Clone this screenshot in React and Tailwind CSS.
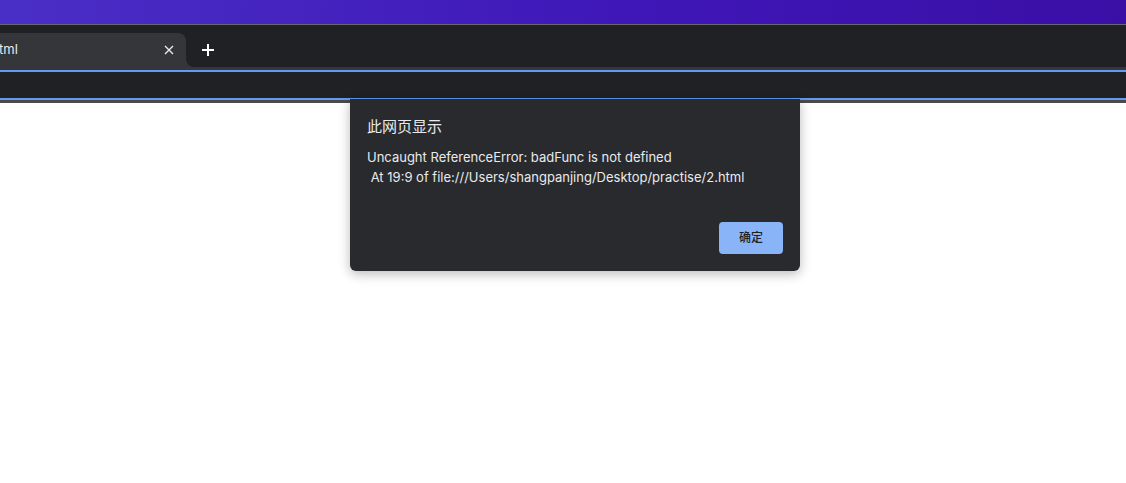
import React from 'react';

const sans = { fontFamily: '"Liberation Sans", "Noto Sans CJK SC", sans-serif' };
const ui = { fontFamily: 'Inter, "Noto Sans CJK SC", sans-serif' };

const AlertDialog = () => {
  return (
    <div
      className="absolute left-[350px] top-[99px] w-[450px] bg-[#292a2d] rounded-b-md shadow-[0_3px_12px_rgba(0,0,0,0.28)] px-[17px] pt-[18px] pb-[17px] text-[#e8eaed]"
      style={ui}
    >
      <div className="h-[20px] leading-[20px] text-[15px]">此网页显示</div>
      <div className="mt-[10px] text-[13px] leading-[20px] whitespace-pre">
        <div>Uncaught ReferenceError: badFunc is not defined</div>
        <div> At 19:9 of file:///Users/shangpanjing/Desktop/practise/2.html</div>
      </div>
      <div className="mt-[35px] flex justify-end">
        <button className="w-[64px] h-[32px] rounded-[4px] bg-[#8ab4f8] text-[#202124] text-[12px] font-medium">
          确定
        </button>
      </div>
    </div>
  );
};

const App = () => {
  return (
    <div className="relative w-full h-[483px] overflow-hidden bg-white" style={sans}>
      {/* desktop wallpaper behind window */}
      <div className="h-[24px] bg-[linear-gradient(100deg,#4a2fc6_0%,#3f17b8_55%,#3a0fa6_100%)]" />
      <div className="h-px bg-[#6a6a6e]" />

      {/* tab strip */}
      <div className="h-[42px] flex items-end bg-[linear-gradient(to_bottom,#202124_30px,#35363a_30px)]">
        <div className="w-[186px] h-[34px] bg-[#35363a] rounded-tr-lg flex items-center justify-between pr-[12px] shrink-0">
          <span className="text-[13px] text-[#e8eaed] -ml-[1px]" style={ui}>tml</span>
          <svg width="10" height="10" viewBox="0 0 10 10" className="text-[#e8eaed]">
            <path d="M1 1L9 9M9 1L1 9" stroke="currentColor" strokeWidth="1.4" />
          </svg>
        </div>
        <div className="flex-1 h-full bg-[#202124] rounded-bl-lg flex items-center">
          <svg width="14" height="14" viewBox="0 0 14 14" className="ml-[15px] mt-[8px] text-white">
            <path d="M7 1V13M1 7H13" stroke="currentColor" strokeWidth="2" />
          </svg>
        </div>
      </div>

      <div className="h-[3px] bg-[#35363a]" />
      <div className="h-[2px] bg-[#5f9bf0]" />
      {/* toolbar */}
      <div className="h-[26px] bg-[#202124]" />
      <div className="h-[2px] bg-[#5f9bf0]" />
      <div className="h-[3px] bg-[#4a4a4d]" />

      <AlertDialog />
    </div>
  );
};

export default App;
